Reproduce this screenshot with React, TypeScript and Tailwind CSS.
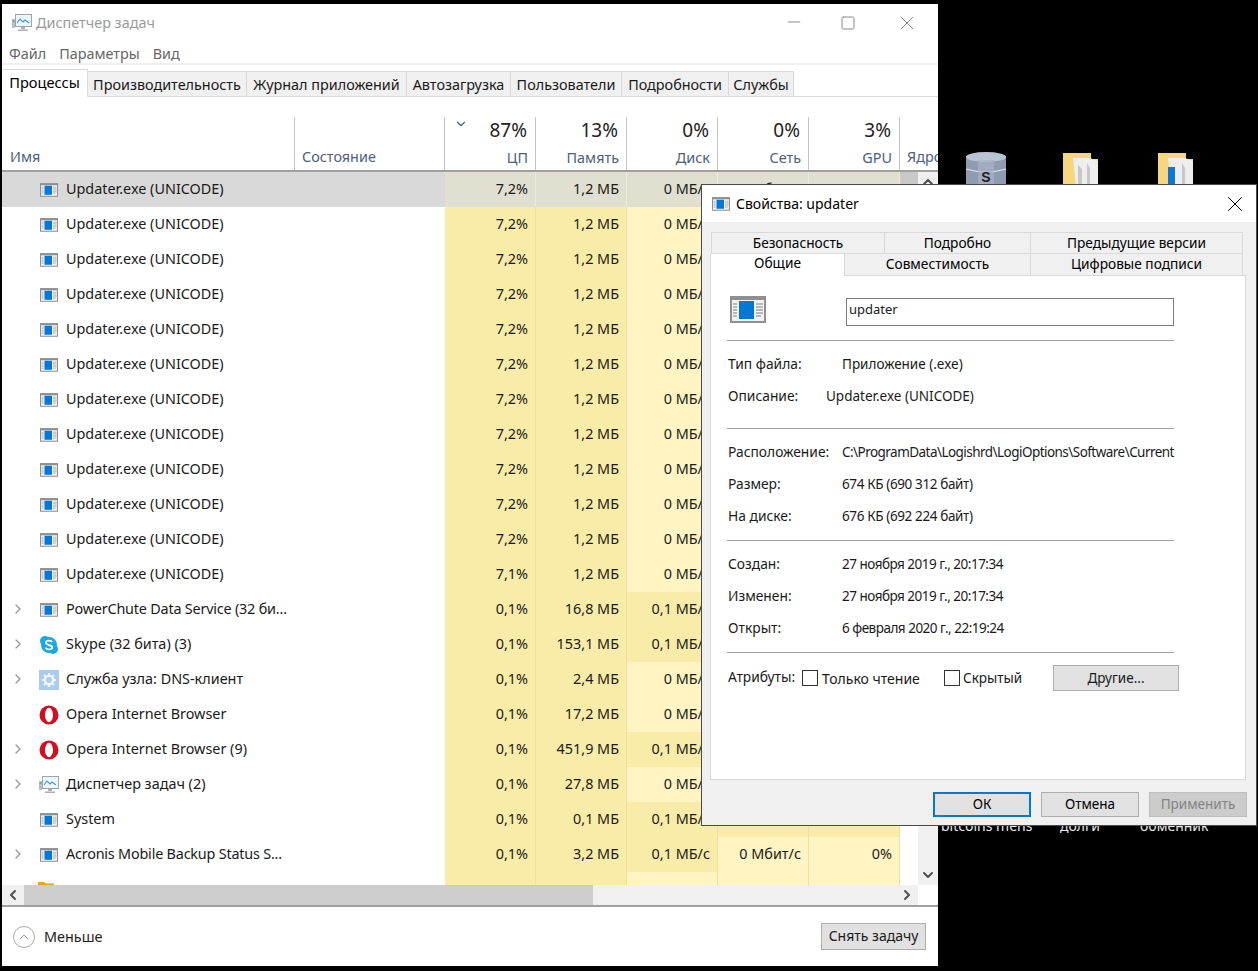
import { ChevronDown, ChevronLeft, ChevronRight, ChevronUp, Minus, Square, X } from "lucide-react";

type IconKind = "app" | "skype" | "gear" | "opera" | "taskmgr" | "folder";

interface ProcessRow {
  name: string;
  icon: IconKind;
  expand?: boolean;
  squeeze?: boolean;
  cpu: string;
  mem: string;
  disk: string;
  net: string;
  gpu: string;
  hotNet?: boolean;
}

const updater = (cpu: string): ProcessRow => ({
  name: "Updater.exe (UNICODE)",
  icon: "app",
  cpu,
  mem: "1,2 МБ",
  disk: "0 МБ/с",
  net: "0 Мбит/с",
  gpu: "0%",
});

const rows: ProcessRow[] = [
  ...Array.from({ length: 11 }, () => updater("7,2%")),
  updater("7,1%"),
  { name: "PowerChute Data Service (32 би...", icon: "app", expand: true, squeeze: true, cpu: "0,1%", mem: "16,8 МБ", disk: "0,1 МБ/с", net: "0 Мбит/с", gpu: "0%" },
  { name: "Skype (32 бита) (3)", icon: "skype", expand: true, cpu: "0,1%", mem: "153,1 МБ", disk: "0,1 МБ/с", net: "0 Мбит/с", gpu: "0%" },
  { name: "Служба узла: DNS-клиент", icon: "gear", expand: true, cpu: "0,1%", mem: "2,4 МБ", disk: "0 МБ/с", net: "0 Мбит/с", gpu: "0%" },
  { name: "Opera Internet Browser", icon: "opera", cpu: "0,1%", mem: "17,2 МБ", disk: "0 МБ/с", net: "0 Мбит/с", gpu: "0%" },
  { name: "Opera Internet Browser (9)", icon: "opera", expand: true, cpu: "0,1%", mem: "451,9 МБ", disk: "0,1 МБ/с", net: "0 Мбит/с", gpu: "0%" },
  { name: "Диспетчер задач (2)", icon: "taskmgr", expand: true, cpu: "0,1%", mem: "27,8 МБ", disk: "0 МБ/с", net: "0 Мбит/с", gpu: "0%" },
  { name: "System", icon: "app", cpu: "0,1%", mem: "0,1 МБ", disk: "0,1 МБ/с", net: "0,1 Мбит/с", gpu: "0%", hotNet: true },
  { name: "Acronis Mobile Backup Status S...", icon: "app", expand: true, squeeze: true, cpu: "0,1%", mem: "3,2 МБ", disk: "0,1 МБ/с", net: "0 Мбит/с", gpu: "0%" },
];

const tabs = [
  { label: "Производительность", width: "w-[159px]" },
  { label: "Журнал приложений", width: "w-[160px]" },
  { label: "Автозагрузка", width: "w-[104px]" },
  { label: "Пользователи", width: "w-[111px]" },
  { label: "Подробности", width: "w-[107px]" },
  { label: "Службы", width: "w-[65px]" },
];

const columns = [
  { pct: "87%", label: "ЦП", sort: true },
  { pct: "13%", label: "Память" },
  { pct: "0%", label: "Диск" },
  { pct: "0%", label: "Сеть" },
  { pct: "3%", label: "GPU" },
];

function AppIcon({ className }: { className: string }) {
  return (
    <svg viewBox="0 0 36 27" className={className}>
      <rect x="1" y="1" width="34" height="25" fill="#f2f2f2" stroke="#8f8f8f" strokeWidth="2" />
      <rect x="0" y="0" width="36" height="4" fill="#8f8f8f" />
      <rect x="9" y="5" width="15" height="18" fill="#0078d7" />
      <path d="M3 8h4M3 11h4M3 14h4M3 17h4M3 20h4M26 8h7M26 11h7M26 14h7M26 17h7M26 20h5" stroke="#a6a6a6" strokeWidth="1.4" />
    </svg>
  );
}

function SkypeIcon() {
  return (
    <svg viewBox="0 0 20 20" className="h-5 w-5">
      <circle cx="6" cy="6" r="5" fill="#19a9e5" />
      <circle cx="14" cy="14" r="5" fill="#19a9e5" />
      <circle cx="10" cy="10" r="8" fill="#19a9e5" />
      <path d="M13.2 7.2C12.6 6 11.4 5.6 10 5.6c-1.8 0-3.1.9-3.1 2.2 0 3 6.4 1.6 6.4 4.5 0 1.3-1.4 2.2-3.2 2.2-1.6 0-2.9-.6-3.5-1.9" fill="none" stroke="#fff" strokeWidth="1.7" />
    </svg>
  );
}

function GearIcon() {
  return (
    <svg viewBox="0 0 20 20" className="h-5 w-5">
      <rect width="20" height="20" fill="#a9cdf0" />
      <circle cx="10" cy="10" r="4.2" fill="none" stroke="#eef5fc" strokeWidth="2.6" />
      <path d="M10 3v3M10 14v3M3 10h3M14 10h3M5 5l2 2M13 13l2 2M15 5l-2 2M7 13l-2 2" stroke="#eef5fc" strokeWidth="2" />
    </svg>
  );
}

function OperaIcon() {
  return (
    <svg viewBox="0 0 20 20" className="h-5 w-5">
      <circle cx="10" cy="10" r="9.5" fill="#d01020" />
      <ellipse cx="10" cy="10" rx="4" ry="7.2" fill="#fff" />
    </svg>
  );
}

function TaskManagerIcon({ className = "h-[18px] w-5" }: { className?: string }) {
  return (
    <svg viewBox="0 0 20 18" className={className}>
      <rect x="3.5" y="0.5" width="16" height="12" fill="#eef6fb" stroke="#9aa5ad" />
      <path d="M5 9l3-4 3 3 2-2 4 3" fill="none" stroke="#3c9bd8" strokeWidth="1.1" />
      <rect x="0" y="5" width="3" height="9" fill="#b8bec2" />
      <rect x="0.7" y="6" width="1.6" height="2" fill="#5fc04a" />
      <path d="M9 13h4v2H9zM6 15.5h10V17H6z" fill="#a8b0b5" />
    </svg>
  );
}

function RowIcon({ kind }: { kind: IconKind }) {
  if (kind === "app") return <AppIcon className="h-[14px] w-[18px]" />;
  if (kind === "skype") return <SkypeIcon />;
  if (kind === "gear") return <GearIcon />;
  if (kind === "opera") return <OperaIcon />;
  if (kind === "taskmgr") return <TaskManagerIcon />;
  return null;
}

function TitleBar() {
  return (
    <div className="flex h-[37px] shrink-0 items-center pl-[10px]">
      <TaskManagerIcon className="h-[18px] w-5" />
      <span className="ml-[4px] text-[14.4px] text-[#9a9a9a]">Диспетчер задач</span>
      <div className="ml-auto flex items-center text-[#8a8a8a]">
        <Minus size={20} strokeWidth={1} absoluteStrokeWidth className="mr-[36px] -translate-y-px" />
        <Square size={16} strokeWidth={1} absoluteStrokeWidth className="mr-[39px]" />
        <X size={24} strokeWidth={1} absoluteStrokeWidth className="mr-[19px]" />
      </div>
    </div>
  );
}

function MenuBar() {
  return (
    <div className="flex h-[24px] shrink-0 items-center gap-[13px] border-b-2 border-[#f0f0f0] pl-[7px] pt-[3px] text-[14.4px] text-[#666666]">
      <span>Файл</span>
      <span>Параметры</span>
      <span>Вид</span>
    </div>
  );
}

function TabStrip() {
  return (
    <div className="mt-[4px] flex h-[28px] shrink-0 items-end border-b border-[#d9d9d9]">
      <div className="relative top-px flex h-[28px] w-[86px] items-start justify-center border-r border-t border-[#d9d9d9] bg-white pt-[2px] text-[14.6px] text-black">
        Процессы
      </div>
      {tabs.map((tab) => (
        <div
          key={tab.label}
          className={`flex h-[25px] items-center justify-center border-r border-t border-[#d9d9d9] bg-[#f0f0f0] pt-[2px] text-[14.4px] text-[#1a1a1a] ${tab.width}`}
        >
          {tab.label}
        </div>
      ))}
    </div>
  );
}

function TableHeader() {
  return (
    <div className="mt-[20px] flex h-[55px] shrink-0 overflow-hidden border-b-2 border-[#a0a0a0] text-[#4c607a]">
      <div className="flex w-[293px] shrink-0 items-end border-r border-[#c4c4c4] pb-[2px] pl-2 text-[14.4px]">Имя</div>
      <div className="flex w-[150px] shrink-0 items-end border-r border-[#c4c4c4] pb-[2px] pl-[7px] text-[14.4px]">Состояние</div>
      {columns.map((col) => (
        <div key={col.label} className="relative flex w-[91px] shrink-0 flex-col items-end justify-between border-r border-[#c4c4c4] pb-[2px] pr-[7px] pt-[1px]">
          {col.sort && <ChevronDown size={14} className="absolute left-[9px] top-0 text-[#4c607a]" />}
          <span className="mr-px text-[19px] leading-[24px] text-[#222222]">{col.pct}</span>
          <span className="text-[14.4px] leading-[20px]">{col.label}</span>
        </div>
      ))}
      <div className="flex flex-1 items-end whitespace-nowrap pb-[2px] pl-[7px] text-[14.4px]">Ядро</div>
    </div>
  );
}

function MetricCell({ value, tone, selected }: { value: string; tone: "hot" | "warm"; selected: boolean }) {
  const bg = selected ? "bg-[#e1dfcf] border-[#ecead9]" : tone === "hot" ? "bg-[#f9eca8] border-[#f1dfa2]" : "bg-[#fff4c2] border-[#f1dfa2]";
  return (
    <div className={`flex w-[91px] shrink-0 items-center justify-end whitespace-nowrap border-r pb-[2px] pr-[7px] ${bg}`}>{value}</div>
  );
}

function ProcessTable() {
  return (
    <div className="flex h-[713px] shrink-0">
      <div className="w-[916px] overflow-hidden text-[14.4px] text-[#1a1a1a]">
        {rows.map((row, i) => {
          const selected = i === 0;
          const hotDisk = row.disk !== "0 МБ/с";
          return (
            <div key={i} className={`flex h-[35px] ${selected ? "bg-[#d9d9d9]" : "bg-white"}`}>
              <div className="flex w-[443px] shrink-0 items-center">
                <div className="flex w-[30px] justify-center">
                  {row.expand && <ChevronRight size={16} className="ml-[1px] -translate-y-px text-[#9a9a9a]" />}
                </div>
                <div className="flex w-[34px] justify-center">
                  <RowIcon kind={row.icon} />
                </div>
                <span className={`whitespace-nowrap pb-[2px] ${row.squeeze ? "tracking-[-0.2px]" : ""}`}>{row.name}</span>
              </div>
              <MetricCell value={row.cpu} tone="hot" selected={selected} />
              <MetricCell value={row.mem} tone="hot" selected={selected} />
              <MetricCell value={row.disk} tone={hotDisk ? "hot" : "warm"} selected={selected} />
              <MetricCell value={row.net} tone={row.hotNet ? "hot" : "warm"} selected={selected} />
              <MetricCell value={row.gpu} tone={row.hotNet ? "hot" : "warm"} selected={selected} />
              <div className={`flex-1 ${selected ? "bg-[#c8c8c8]" : "bg-white"}`} />
            </div>
          );
        })}
        <div className="flex h-[35px] bg-white">
          <div className="w-[443px] shrink-0 pl-[36px] pt-[10px]">
            <svg viewBox="0 0 16 3" className="h-[3px] w-[16px]">
              <path d="M0 0h6l2 1.5h8V3H0z" fill="#e0a526" />
            </svg>
          </div>
          <MetricCell value="" tone="hot" selected={false} />
          <MetricCell value="" tone="hot" selected={false} />
          <MetricCell value="" tone="warm" selected={false} />
          <MetricCell value="" tone="warm" selected={false} />
          <MetricCell value="" tone="warm" selected={false} />
        </div>
      </div>
      <div className="flex w-[20px] flex-col items-center justify-between bg-[#f0f0f0] py-[2px] text-[#505050]">
        <ChevronUp size={16} strokeWidth={3} />
        <ChevronDown size={16} strokeWidth={3} />
      </div>
    </div>
  );
}

function HorizontalScrollbar() {
  return (
    <div className="flex h-[20px] shrink-0 border-b-0">
      <div className="flex w-[916px] items-center bg-[#f0f0f0]">
        <div className="flex w-[22px] justify-center text-[#505050]">
          <ChevronLeft size={16} strokeWidth={3} />
        </div>
        <div className="h-full w-[569px] bg-[#cdcdcd]" />
        <div className="ml-auto flex w-[22px] justify-center text-[#505050]">
          <ChevronRight size={16} strokeWidth={3} />
        </div>
      </div>
    </div>
  );
}

function Footer() {
  return (
    <div className="flex flex-1 items-center border-t-2 border-[#a0a0a0] pl-[11px] pr-[12px]">
      <div className="flex h-[22px] w-[22px] items-center justify-center rounded-full border border-[#a8a8a8] text-[#a0a0a0]">
        <ChevronUp size={16} strokeWidth={1.5} />
      </div>
      <span className="ml-[9px] text-[14.4px] text-[#222222]">Меньше</span>
      <button className="ml-auto flex h-[27px] w-[105px] items-center justify-center border border-[#adadad] bg-[#e1e1e1] pb-[2px] text-[14px] text-[#1a1a1a]">
        Снять задачу
      </button>
    </div>
  );
}

function PropRow({
  label,
  value,
  labelClass = "w-[114px]",
  valueClass = "",
}: {
  label: string;
  value: string;
  labelClass?: string;
  valueClass?: string;
}) {
  return (
    <div className="flex h-[32px] items-center whitespace-nowrap pb-[2px] pl-[17px]">
      <span className={`text-[13.8px] ${labelClass}`}>{label}</span>
      <span className={valueClass}>{value}</span>
    </div>
  );
}

function DialogButton({ label, variant }: { label: string; variant?: "primary" | "disabled" }) {
  const look =
    variant === "primary"
      ? "border-2 border-[#0078d7] bg-[#e1e1e1] text-black"
      : variant === "disabled"
        ? "border border-[#bfbfbf] bg-[#cccccc] text-[#838383]"
        : "border border-[#adadad] bg-[#e1e1e1] text-black";
  return <div className={`flex h-[25px] w-[98px] items-center justify-center pb-[1px] text-[13.5px] ${look}`}>{label}</div>;
}

function PropertiesDialog() {
  const dateClass = "tracking-[-0.5px]";
  return (
    <div className="absolute left-[701px] top-[184px] flex h-[642px] w-[556px] flex-col border border-[#4a4a4a] bg-[#f0f0f0] text-[13.5px] text-[#1a1a1a]">
      <div className="flex h-[37px] shrink-0 items-center bg-white pl-[10px] pr-[8px]">
        <AppIcon className="h-[14px] w-[18px]" />
        <span className="ml-[6px] text-[14px] text-black">Свойства: updater</span>
        <X size={26} strokeWidth={1} absoluteStrokeWidth className="ml-auto text-black" />
      </div>

      <div className="relative ml-[9px] mt-[10px] flex h-[21px] w-[532px] shrink-0 text-[13.7px] text-black">
        <div className="flex w-[174px] items-center justify-center border-l border-r border-t border-[#d9d9d9] pt-[1px]">Безопасность</div>
        <div className="flex w-[146px] items-center justify-center border-r border-t border-[#d9d9d9] pt-[1px]">Подробно</div>
        <div className="flex flex-1 items-center justify-center border-r border-t border-[#d9d9d9] pt-[1px]">Предыдущие версии</div>
      </div>
      <div className="relative z-10 ml-[8px] flex h-[22px] w-[534px] shrink-0 text-[13.7px] text-black">
        <div className="relative z-10 flex h-[23px] w-[135px] items-start justify-center border-l border-r border-t border-[#d9d9d9] bg-white leading-[18px]">Общие</div>
        <div className="flex w-[186px] items-center justify-center border-r border-t border-[#d9d9d9]">Совместимость</div>
        <div className="flex w-[212px] items-center justify-center border-r border-t border-[#d9d9d9]">Цифровые подписи</div>
      </div>

      <div className="ml-[8px] flex h-[505px] w-[536px] shrink-0 flex-col border border-[#d9d9d9] bg-white">
        <div className="flex items-start pl-[19px] pt-[20px]">
          <AppIcon className="h-[27px] w-[36px]" />
          <div className="ml-[80px] mt-[2px] flex h-[28px] w-[328px] items-center border border-[#7a7a7a] pb-[4px] pl-[2px] text-[13px]">updater</div>
        </div>
        <div className="ml-[16px] mt-[14px] h-px w-[447px] bg-[#a0a0a0]" />

        <div className="pt-[8px]">
          <PropRow label="Тип файла:" value="Приложение (.exe)" />
          <PropRow label="Описание:" value="Updater.exe (UNICODE)" labelClass="w-[98px]" />
        </div>
        <div className="ml-[16px] mt-[15px] h-px w-[447px] bg-[#a0a0a0]" />

        <div className="pt-[8px]">
          <PropRow label="Расположение:" value="C:\ProgramData\Logishrd\LogiOptions\Software\Current" valueClass="tracking-[-0.54px]" />
          <PropRow label="Размер:" value="674 КБ (690 312 байт)" valueClass="tracking-[-0.38px]" />
          <PropRow label="На диске:" value="676 КБ (692 224 байт)" valueClass="tracking-[-0.38px]" />
        </div>
        <div className="ml-[16px] mt-[7px] h-px w-[447px] bg-[#a0a0a0]" />

        <div className="pt-[8px]">
          <PropRow label="Создан:" value="27 ноября 2019 г., 20:17:34" valueClass={dateClass} />
          <PropRow label="Изменен:" value="27 ноября 2019 г., 20:17:34" valueClass={dateClass} />
          <PropRow label="Открыт:" value="6 февраля 2020 г., 22:19:24" valueClass={dateClass} />
        </div>
        <div className="ml-[16px] mt-[7px] h-px w-[447px] bg-[#a0a0a0]" />

        <div className="flex items-center pl-[17px] pt-[12px]">
          <span className="w-[74px] -translate-y-[1px] text-[13.8px]">Атрибуты:</span>
          <div className="h-[16px] w-[16px] border border-[#333333]" />
          <span className="ml-[4px] w-[122px] text-[14px]">Только чтение</span>
          <div className="h-[16px] w-[16px] border border-[#333333]" />
          <span className="ml-[3px] w-[90px]">Скрытый</span>
          <div className="flex h-[26px] w-[126px] items-center justify-center border border-[#adadad] bg-[#e1e1e1]">Другие...</div>
        </div>
      </div>

      <div className="ml-[231px] mt-[12px] flex gap-[10px]">
        <DialogButton label="ОК" variant="primary" />
        <DialogButton label="Отмена" />
        <DialogButton label="Применить" variant="disabled" />
      </div>
    </div>
  );
}

function DesktopIcons() {
  return (
    <>
      <svg viewBox="0 0 40 33" className="absolute left-[966px] top-[152px] h-[33px] w-[40px]">
        <rect x="0" y="4" width="40" height="29" fill="#8e9bb0" />
        <ellipse cx="20" cy="5" rx="20" ry="5" fill="#b9c4d2" />
        <path d="M0 17q20 6 40 0" fill="none" stroke="#e6ebf0" strokeWidth="1" />
        <rect x="12" y="8" width="16" height="25" fill="#aab5c4" opacity="0.7" />
        <text x="20" y="30" textAnchor="middle" fontSize="14" fontWeight="bold" fill="#222222" fontFamily="'Liberation Sans', sans-serif">S</text>
      </svg>
      <svg viewBox="0 0 35 33" className="absolute left-[1063px] top-[153px] h-[33px] w-[35px]">
        <path d="M0 0h28v6h7v27H0z" fill="#f5d77f" />
        <path d="M10 5h17l8 3v25H13z" fill="#eeeeee" />
        <path d="M15 12l4 4v17h-4zM24 10l3 5v18h-3z" fill="#c8c8c8" />
      </svg>
      <svg viewBox="0 0 35 33" className="absolute left-[1158px] top-[153px] h-[33px] w-[35px]">
        <path d="M0 0h28v6h7v27H0z" fill="#f5d77f" />
        <path d="M10 5h17l8 3v25H13z" fill="#eeeeee" />
        <path d="M10 14h7v19h-7z" fill="#0f78d4" />
        <path d="M24 10l3 5v18h-3z" fill="#c8c8c8" />
      </svg>
      <div className="absolute left-[941px] top-[815px] text-[14px] text-[#e8e8e8]">bitcoins mens</div>
      <div className="absolute left-[1060px] top-[815px] text-[14px] text-[#e8e8e8]">долги</div>
      <div className="absolute left-[1140px] top-[815px] text-[14px] text-[#e8e8e8]">обменник</div>
    </>
  );
}

export default function App() {
  return (
    <div className="relative h-[971px] w-[1258px] overflow-hidden bg-black pl-[2px] pt-[4px] font-['Noto_Sans',sans-serif]">
      <DesktopIcons />
      <div className="relative flex h-[962px] w-[936px] flex-col bg-white">
        <TitleBar />
        <MenuBar />
        <TabStrip />
        <TableHeader />
        <ProcessTable />
        <HorizontalScrollbar />
        <Footer />
      </div>
      <PropertiesDialog />
    </div>
  );
}
